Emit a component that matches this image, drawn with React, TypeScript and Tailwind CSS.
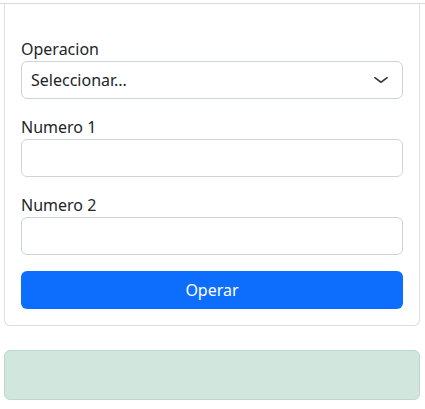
import React from "react";

export default function App() {
  const font = { fontFamily: '"Noto Sans", "Open Sans", sans-serif' };
  return (
    <div className="w-[425px] h-[409px] bg-white text-[#212529]" style={font}>
      <div className="h-[4px] border-b border-[#d9d9d9]" />
      <div className="ml-[4px] w-[416px] border-x border-b border-[#dfdfdf] rounded-b-[6px] px-4 pt-[33px] pb-4 flex flex-col">
        <div className="flex flex-col mb-4">
          <label className="text-[16px] leading-6">Operacion</label>
          <div className="h-[38px] border border-[#ced4da] rounded-[6px] flex items-center justify-between pl-[9px] pr-[13px]">
            <span className="text-[16px] leading-6">Seleccionar...</span>
            <svg width="16" height="12" viewBox="0 0 16 16" preserveAspectRatio="none" fill="none">
              <path d="M2 5l6 6 6-6" stroke="#343a40" strokeWidth="2" strokeLinecap="round" strokeLinejoin="round" />
            </svg>
          </div>
        </div>
        <div className="flex flex-col mb-4">
          <label className="text-[16px] leading-6">Numero 1</label>
          <input className="h-[38px] border border-[#ced4da] rounded-[6px] px-3 outline-none" />
        </div>
        <div className="flex flex-col mb-4">
          <label className="text-[16px] leading-6">Numero 2</label>
          <input className="h-[38px] border border-[#ced4da] rounded-[6px] px-3 outline-none" />
        </div>
        <button className="h-[38px] bg-[#0d6efd] rounded-[6px] text-white text-[16px] leading-6">Operar</button>
      </div>
      <div className="ml-[4px] w-[416px] mt-[24px] h-[50px] bg-[#d1e7dd] border border-[#badbcc] rounded-[6px]" />
    </div>
  );
}
